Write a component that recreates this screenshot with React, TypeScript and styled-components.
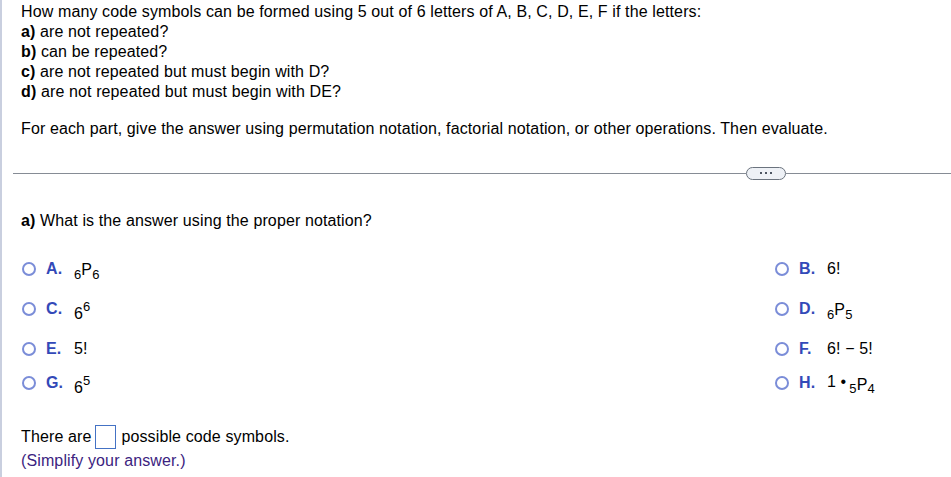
import React from "react";
import styled, { createGlobalStyle } from "styled-components";

const Global = createGlobalStyle`
  html, body { margin: 0; padding: 0; background: #ffffff; }
  body { font-family: "Liberation Sans", Arial, sans-serif; font-size: 16px; letter-spacing: 0.12px; color: #000; }
`;

const Page = styled.div`
  min-height: 477px;
  box-sizing: border-box;
  border-left: 2px solid #c9cfdf;
  padding: 2px 0 0 19px;
  line-height: 20px;
`;

const Paragraph = styled.div<{ $mt?: number }>`
  margin-top: ${(p) => p.$mt ?? 0}px;
  line-height: 20px;
`;

const Line = styled.div``;

const Separator = styled.div`
  display: flex;
  align-items: center;
  height: 14px;
  margin: 27px 0 0 -8px;
`;

const Rule = styled.div<{ $w?: number }>`
  height: 1px;
  background: #868c95;
  flex: ${(p) => (p.$w ? `0 0 ${p.$w}px` : "1 1 auto")};
`;

const MoreButton = styled.div`
  box-sizing: border-box;
  width: 40px;
  height: 13px;
  border: 1.5px solid #6b737e;
  border-radius: 7px;
  background: #eef1f6;
  display: flex;
  align-items: center;
  justify-content: center;
  gap: 3px;
`;

const Dot = styled.span`
  width: 2px;
  height: 2px;
  background: #4d5562;
`;

const Options = styled.div`
  margin: 28px 0 0 1px;
  display: grid;
  grid-template-columns: 753px 1fr;
  grid-template-rows: 40px 40px 34px 34px;
  align-items: start;
`;

const Option = styled.div`
  display: flex;
  align-items: center;
  height: 20px;
  white-space: nowrap;
`;

const Radio = styled.span`
  box-sizing: border-box;
  width: 14px;
  height: 14px;
  border: 2px solid #7b8dd8;
  border-radius: 50%;
  background: #fff;
  flex: 0 0 auto;
`;

const Label = styled.span`
  font-weight: bold;
  color: #3349b8;
  margin-left: 10px;
  width: 28px;
`;

const Value = styled.span`
  line-height: 20px;
`;

const Sh = styled.span<{ $v: number; $s?: number; $gap?: number }>`
  vertical-align: ${(p) => p.$v}px;
  font-size: ${(p) => p.$s ?? 16}px;
  line-height: 1;
  margin-right: ${(p) => p.$gap ?? 0}px;
`;

const AnswerLine = styled.div`
  display: flex;
  align-items: center;
  height: 24px;
  margin-top: 18px;
`;

const Box = styled.span`
  box-sizing: border-box;
  display: inline-block;
  width: 21px;
  height: 24px;
  border: 1px solid #4472c4;
  margin: 0 5px 0 4px;
`;

const Hint = styled.div`
  margin-top: 2px;
  color: #3b2380;
  line-height: 20px;
`;

type Opt = { letter: string; value: React.ReactNode };

const left: Opt[] = [
  {
    letter: "A.",
    value: (
      <>
        <Sh $v={-7} $s={13}>6</Sh>
        <Sh $v={-3}>P</Sh>
        <Sh $v={-7} $s={13}>6</Sh>
      </>
    ),
  },
  {
    letter: "C.",
    value: (
      <>
        <Sh $v={-7}>6</Sh>
        <Sh $v={1} $s={13}>6</Sh>
      </>
    ),
  },
  { letter: "E.", value: <>5!</> },
  {
    letter: "G.",
    value: (
      <>
        <Sh $v={-7}>6</Sh>
        <Sh $v={1} $s={13}>5</Sh>
      </>
    ),
  },
];

const right: Opt[] = [
  { letter: "B.", value: <>6!</> },
  {
    letter: "D.",
    value: (
      <>
        <Sh $v={-7} $s={13}>6</Sh>
        <Sh $v={-3}>P</Sh>
        <Sh $v={-7} $s={13}>5</Sh>
      </>
    ),
  },
  { letter: "F.", value: <>6! {"\u2212"} 5!</> },
  {
    letter: "H.",
    value: (
      <>
        <Sh $v={-1}>1</Sh>
        <Sh $v={-1} $gap={3}>&nbsp;•</Sh>
        <Sh $v={-7} $s={13}>5</Sh>
        <Sh $v={-4}>P</Sh>
        <Sh $v={-7} $s={13}>4</Sh>
      </>
    ),
  },
];

export default function App() {
  const rows = left.map((l, i) => [l, right[i]]);
  return (
    <>
      <Global />
      <Page>
        <Paragraph>
          <Line>How many code symbols can be formed using 5 out of 6 letters of A, B, C, D, E, F if the letters:</Line>
          <Line><b>a)</b> are not repeated?</Line>
          <Line><b>b)</b> can be repeated?</Line>
          <Line><b>c)</b> are not repeated but must begin with D?</Line>
          <Line><b>d)</b> are not repeated but must begin with DE?</Line>
        </Paragraph>
        <Paragraph $mt={17}>
          For each part, give the answer using permutation notation, factorial notation, or other operations. Then evaluate.
        </Paragraph>
        <Separator>
          <Rule $w={733} />
          <MoreButton>
            <Dot />
            <Dot />
            <Dot />
          </MoreButton>
          <Rule />
        </Separator>
        <Paragraph $mt={31}>
          <b>a)</b> What is the answer using the proper notation?
        </Paragraph>
        <Options>
          {rows.map((pair) =>
            pair.map((o) => (
              <Option key={o.letter}>
                <Radio />
                <Label>{o.letter}</Label>
                <Value>{o.value}</Value>
              </Option>
            ))
          )}
        </Options>
        <AnswerLine>
          There are
          <Box />
          possible code symbols.
        </AnswerLine>
        <Hint>(Simplify your answer.)</Hint>
      </Page>
    </>
  );
}
